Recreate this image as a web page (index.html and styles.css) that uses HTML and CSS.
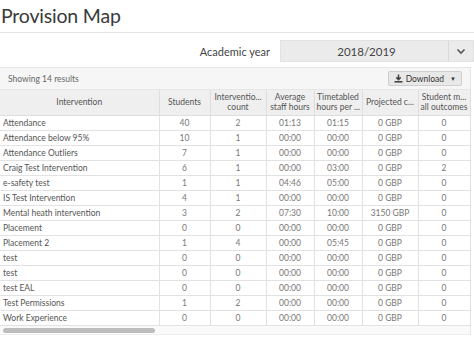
FILE: index.html
```html
<!DOCTYPE html>
<html>
<head>
<meta charset="utf-8">
<link rel="stylesheet" href="styles.css">
</head>
<body>
<div class="page">
  <h1 class="title">Provision Map</h1>
  <div class="filters">
    <label class="filter-label">Academic year</label>
    <div class="select">
      <span class="select-value">2018/2019</span>
      <span class="select-arrow">
        <svg width="10" height="7" viewBox="0 0 10 7"><path d="M1.5 1.5 L5 5 L8.5 1.5" fill="none" stroke="#555" stroke-width="1.6"/></svg>
      </span>
    </div>
  </div>
  <div class="panel">
    <div class="panel-head">
      <span class="count">Showing 14 results</span>
      <button class="download">
        <svg width="9" height="9" viewBox="0 0 9 9"><path d="M4.5 0.5 V5.5 M2.3 3.4 L4.5 5.6 L6.7 3.4" fill="none" stroke="#444" stroke-width="1.5"/><rect x="0.5" y="7" width="8" height="1.6" fill="#444"/></svg>
        <span>Download</span>
        <span class="caret">▼</span>
      </button>
    </div>
    <div class="table-wrap">
      <table class="grid">
        <colgroup>
          <col style="width:159px"><col style="width:51px"><col style="width:56px"><col style="width:48px"><col style="width:48px"><col style="width:56px"><col style="width:52px">
        </colgroup>
        <thead>
          <tr>
            <th>Intervention</th>
            <th>Students</th>
            <th>Interventio...<br>count</th>
            <th>Average<br>staff hours</th>
            <th>Timetabled<br>hours per ...</th>
            <th>Projected c...</th>
            <th>Student m...<br>all outcomes</th>
          </tr>
        </thead>
        <tbody>
          <tr><td>Attendance</td><td>40</td><td>2</td><td>01:13</td><td>01:15</td><td>0 GBP</td><td>0</td></tr>
          <tr><td>Attendance below 95%</td><td>10</td><td>1</td><td>00:00</td><td>00:00</td><td>0 GBP</td><td>0</td></tr>
          <tr><td>Attendance Outliers</td><td>7</td><td>1</td><td>00:00</td><td>00:00</td><td>0 GBP</td><td>0</td></tr>
          <tr><td>Craig Test Intervention</td><td>6</td><td>1</td><td>00:00</td><td>03:00</td><td>0 GBP</td><td>2</td></tr>
          <tr><td>e-safety test</td><td>1</td><td>1</td><td>04:46</td><td>05:00</td><td>0 GBP</td><td>0</td></tr>
          <tr><td>IS Test Intervention</td><td>4</td><td>1</td><td>00:00</td><td>00:00</td><td>0 GBP</td><td>0</td></tr>
          <tr><td>Mental heath intervention</td><td>3</td><td>2</td><td>07:30</td><td>10:00</td><td>3150 GBP</td><td>0</td></tr>
          <tr><td>Placement</td><td>0</td><td>0</td><td>00:00</td><td>00:00</td><td>0 GBP</td><td>0</td></tr>
          <tr><td>Placement 2</td><td>1</td><td>4</td><td>00:00</td><td>05:45</td><td>0 GBP</td><td>0</td></tr>
          <tr><td>test</td><td>0</td><td>0</td><td>00:00</td><td>00:00</td><td>0 GBP</td><td>0</td></tr>
          <tr><td>test</td><td>0</td><td>0</td><td>00:00</td><td>00:00</td><td>0 GBP</td><td>0</td></tr>
          <tr><td>test EAL</td><td>0</td><td>0</td><td>00:00</td><td>00:00</td><td>0 GBP</td><td>0</td></tr>
          <tr><td>Test Permissions</td><td>1</td><td>2</td><td>00:00</td><td>00:00</td><td>0 GBP</td><td>0</td></tr>
          <tr><td>Work Experience</td><td>0</td><td>0</td><td>00:00</td><td>00:00</td><td>0 GBP</td><td>0</td></tr>
        </tbody>
      </table>
      <div class="scrollbar"><div class="thumb"></div></div>
    </div>
  </div>
</div>
</body>
</html>
```
FILE: styles.css
```css
* { box-sizing: border-box; }
html, body { margin: 0; padding: 0; background: #fff; }
body { font-family: Lato, "Open Sans", sans-serif; color: #555; overflow: hidden; }
.page { width: 474px; }
.title {
  margin: 0;
  padding: 3px 0 0 1px;
  height: 33px;
  font-size: 19.5px;
  font-weight: 400;
  letter-spacing: -0.2px;
  color: #3a3a3a;
  line-height: 26px;
  border-bottom: 1px solid #e4e4e4;
}
.filters {
  display: flex;
  align-items: center;
  justify-content: flex-end;
  height: 34px;
  padding-top: 2px;
}
.filter-label { font-size: 11px; color: #444; margin-right: 10px; }
.select {
  width: 194px;
  height: 22px;
  background: #ebebeb;
  display: flex;
  align-items: center;
  border: 1px solid #e2e2e2;
}
.select-value { flex: 1; text-align: center; font-size: 11.5px; color: #444; padding-left: 4px; }
.select-arrow {
  width: 25px; height: 100%;
  border-left: 1px solid #d8d8d8;
  display: flex; align-items: center; justify-content: center;
}
.panel { border-top: 1px solid #e6e6e6; border-right: 1px solid #e6e6e6; width: 471px; }
.panel-head {
  background: #f6f6f6;
  height: 22px;
  display: flex;
  align-items: center;
  justify-content: space-between;
  padding: 0 8px 0 8px;
  border-bottom: 1px solid #e6e6e6;
}
.count { font-size: 8.5px; color: #666; }
.download {
  display: flex; align-items: center; gap: 3px;
  height: 15px;
  padding: 0 5px 0 5px;
  font-family: inherit;
  font-size: 8.5px;
  color: #333;
  background: #e8e8e8;
  border: 1px solid #cfcfcf;
  border-radius: 2px;
}
.caret { font-size: 6px; margin-left: 3px; }
.grid {
  border-collapse: collapse;
  table-layout: fixed;
  width: 470px;
  font-size: 8.5px;
}
.grid th {
  background: #efefef;
  font-weight: 400;
  color: #555;
  height: 25px;
  line-height: 10px;
  padding: 0 2px;
  border: 1px solid #dedede;
  border-top: none;
  text-align: center;
  white-space: nowrap;
  overflow: hidden;
}
.grid th:first-child, .grid td:first-child { border-left: none; }
.grid td {
  height: 15px;
  padding: 0 3px;
  border: 1px solid #e2e2e2;
  text-align: center;
  color: #777;
  white-space: nowrap;
}
.grid td:first-child { text-align: left; color: #555; }
.scrollbar { height: 9px; padding: 2px 0 0 3px; background: #fafafa; border-bottom: 1px solid #eee; }
.thumb { width: 152px; height: 5px; background: #bdbdbd; border-radius: 3px; }
```
